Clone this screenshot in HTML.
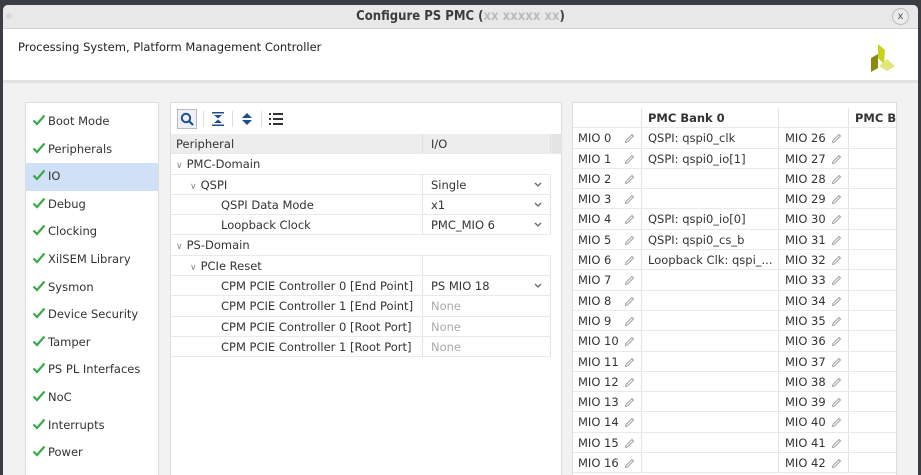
<!DOCTYPE html><html><head><style>
*{margin:0;padding:0;box-sizing:border-box}
body{width:921px;height:470px;overflow:hidden;background:#3a3d44;font-family:"DejaVu Sans","Liberation Sans",sans-serif;font-size:11.5px;color:#333;position:relative}
.abs{position:absolute}
#win{left:3px;top:5px;width:915px;height:470px;background:#f2f2f2;border-radius:5px 5px 0 0;overflow:hidden}
#title{left:0;top:0;width:915px;height:24px;background:#e8e8e8;border-bottom:1px solid #d0d0d0;text-align:center;font-weight:bold;font-size:13px;line-height:23px;color:#3c3c3c;font-family:"DejaVu Sans Condensed","DejaVu Sans",sans-serif}
#hdr{left:0;top:24px;width:915px;height:54px;background:#fff;border-bottom:3px solid #e2e2e2}
#nav{left:22px;top:97px;width:134px;height:380px;background:#fff;border:1px solid #ddd;padding-top:5px}
.ni{height:27.6px;line-height:27.6px;padding-left:4px;color:#333}
.ni .ck{display:inline-block;width:18px;vertical-align:middle;margin-top:-3px}
.sel{background:#cfe0f7}
#mid{left:167px;top:97px;width:392px;height:380px;background:#fff;border:1px solid #ddd}
.row{position:relative;height:20.3px;line-height:20px;border-bottom:1px solid #eaeaea;white-space:nowrap}
.c1{position:absolute;left:0;width:252px;height:100%;border-right:1px solid #e2e2e2}
.c2{position:absolute;left:253px;width:127px;height:100%;border-right:1px solid #e2e2e2;padding-left:7px}
.dd{position:absolute;right:8px;top:7px;width:8px;height:6px}
#rt{left:569px;top:97px;width:325px;height:380px;background:#fff;border:1px solid #ddd;overflow:hidden;padding-top:5px}
.r{position:relative;height:20.3px;line-height:20px;white-space:nowrap}
.r div{position:absolute;top:0;height:100%;border-bottom:1px solid #eaeaea;border-right:1px solid #e4e4e4}
.a{left:0;width:69px;padding-left:5px}
.b{left:69px;width:137px;padding-left:6px}
.c{left:206px;width:70px;padding-left:6px}
.d{left:276px;width:60px}
.a svg{position:absolute;right:6px;top:5px}
.c svg{position:absolute;left:52px;top:5px}
.tr{color:#888;font-size:9px;margin-right:4px}
</style></head><body>
<svg width="0" height="0" style="position:absolute"><defs>
<symbol id="p" viewBox="0 0 11 11"><path d="M1.5,9.5 L2,7.5 L8,1.5 L9.5,3 L3.5,9 Z" fill="none" stroke="#999" stroke-width="0.9"/></symbol>
<symbol id="v" viewBox="0 0 8 6"><path d="M1,1 L4,4 L7,1" fill="none" stroke="#666" stroke-width="1.3"/></symbol>
<symbol id="k" viewBox="0 0 14 12"><path d="M1.5,6.5 L5,10 L12.5,1.5" fill="none" stroke="#3aa94a" stroke-width="2.2"/></symbol>
</defs></svg>
<div id="win" class="abs">
<div id="title" class="abs">Configure PS PMC (<span style="color:#bbb">xx xxxxx xx</span>)</div>
<div class="abs" style="left:3px;top:8px;width:6px;height:6px;border-radius:3px;background:#d8d8d8"></div>
<div class="abs" style="left:889px;top:3px;width:17px;height:17px;border-radius:9px;border:1px solid #bbb;background:#ececec;font-size:10px;line-height:15px;text-align:center;color:#555">x</div>
<div id="hdr" class="abs">
<div class="abs" style="left:15px;top:11px;font-size:11.5px;color:#222">Processing System, Platform Management Controller</div>
<svg class="abs" style="left:866px;top:15px" width="30" height="30" viewBox="0 0 30 30"><polygon points="9,0 16,6 15,20 9,14" fill="#c8d21e"/><polygon points="2,14 9,10 9,24 2,28" fill="#8a8a10"/><polygon points="10,22 18,15 26,22 18,27" fill="#dfe67a"/></svg>
</div>
<div id="nav" class="abs">
<div class="ni"><svg class="ck" width="14" height="12"><use href="#k"/></svg>Boot Mode</div>
<div class="ni"><svg class="ck" width="14" height="12"><use href="#k"/></svg>Peripherals</div>
<div class="ni sel"><svg class="ck" width="14" height="12"><use href="#k"/></svg>IO</div>
<div class="ni"><svg class="ck" width="14" height="12"><use href="#k"/></svg>Debug</div>
<div class="ni"><svg class="ck" width="14" height="12"><use href="#k"/></svg>Clocking</div>
<div class="ni"><svg class="ck" width="14" height="12"><use href="#k"/></svg>XilSEM Library</div>
<div class="ni"><svg class="ck" width="14" height="12"><use href="#k"/></svg>Sysmon</div>
<div class="ni"><svg class="ck" width="14" height="12"><use href="#k"/></svg>Device Security</div>
<div class="ni"><svg class="ck" width="14" height="12"><use href="#k"/></svg>Tamper</div>
<div class="ni"><svg class="ck" width="14" height="12"><use href="#k"/></svg>PS PL Interfaces</div>
<div class="ni"><svg class="ck" width="14" height="12"><use href="#k"/></svg>NoC</div>
<div class="ni"><svg class="ck" width="14" height="12"><use href="#k"/></svg>Interrupts</div>
<div class="ni"><svg class="ck" width="14" height="12"><use href="#k"/></svg>Power</div>
</div>
<div id="mid" class="abs">
<div style="height:31px;position:relative">
<div class="abs" style="left:6px;top:6px;width:20px;height:20px;border:1px solid #bbb;background:#eef2f8"></div>
<svg class="abs" style="left:9px;top:9px" width="14" height="14"><circle cx="6" cy="6" r="4.2" fill="none" stroke="#1f4f8f" stroke-width="2"/><line x1="9" y1="9" x2="13" y2="13" stroke="#1f4f8f" stroke-width="2.2"/></svg>
<div class="abs" style="left:32px;top:8px;width:1px;height:16px;background:#ddd"></div>
<svg class="abs" style="left:40px;top:9px" width="14" height="14"><rect x="1" y="0" width="12" height="1.5" fill="#1f4f8f"/><polygon points="3,3 11,3 7,6.5" fill="#1f4f8f"/><polygon points="3,11 11,11 7,7.5" fill="#1f4f8f"/><rect x="1" y="12.5" width="12" height="1.5" fill="#1f4f8f"/></svg>
<div class="abs" style="left:61px;top:8px;width:1px;height:16px;background:#ddd"></div>
<svg class="abs" style="left:69px;top:9px" width="14" height="14"><polygon points="2,6 12,6 7,1" fill="#1f4f8f"/><polygon points="2,8 12,8 7,13" fill="#1f4f8f"/></svg>
<div class="abs" style="left:90px;top:8px;width:1px;height:16px;background:#ddd"></div>
<svg class="abs" style="left:98px;top:9px" width="14" height="14" fill="#333"><rect x="0" y="1" width="2" height="2"/><rect x="4" y="1" width="10" height="2"/><rect x="0" y="6" width="2" height="2"/><rect x="4" y="6" width="10" height="2"/><rect x="0" y="11" width="2" height="2"/><rect x="4" y="11" width="10" height="2"/></svg>
</div>
<div class="row" style="background:#ededed;width:392px"><div class="c1" style="padding-left:5px">Peripheral</div><div class="c2">I/O</div><div class="abs" style="left:381px;width:10px;height:100%;background:#e4e4e4"></div></div>
<div class="row" style="width:380px"><div class="c1" style="padding-left:5px;border-right:none"><span class="tr">∨</span>PMC-Domain</div></div>
<div class="row" style="width:380px"><div class="c1" style="padding-left:19px"><span class="tr">∨</span>QSPI</div><div class="c2">Single<svg class="dd"><use href="#v"/></svg></div></div>
<div class="row" style="width:380px"><div class="c1" style="padding-left:50px">QSPI Data Mode</div><div class="c2">x1<svg class="dd"><use href="#v"/></svg></div></div>
<div class="row" style="width:380px"><div class="c1" style="padding-left:50px">Loopback Clock</div><div class="c2">PMC_MIO 6<svg class="dd"><use href="#v"/></svg></div></div>
<div class="row" style="width:380px"><div class="c1" style="padding-left:5px;border-right:none"><span class="tr">∨</span>PS-Domain</div></div>
<div class="row" style="width:380px"><div class="c1" style="padding-left:19px"><span class="tr">∨</span>PCIe Reset</div><div class="c2"></div></div>
<div class="row" style="width:380px"><div class="c1" style="padding-left:50px">CPM PCIE Controller 0 [End Point]</div><div class="c2">PS MIO 18<svg class="dd"><use href="#v"/></svg></div></div>
<div class="row" style="width:380px"><div class="c1" style="padding-left:50px">CPM PCIE Controller 1 [End Point]</div><div class="c2" style="color:#aaa">None</div></div>
<div class="row" style="width:380px"><div class="c1" style="padding-left:50px">CPM PCIE Controller 0 [Root Port]</div><div class="c2" style="color:#aaa">None</div></div>
<div class="row" style="width:380px"><div class="c1" style="padding-left:50px">CPM PCIE Controller 1 [Root Port]</div><div class="c2" style="color:#aaa">None</div></div>
</div>
<div id="rt" class="abs">
<div class="r" style="font-weight:bold"><div class="a"></div><div class="b" style="padding-left:6px">PMC Bank 0</div><div class="c"></div><div class="d" style="padding-left:6px">PMC B</div></div>
<div class="r"><div class="a">MIO 0<svg width="11" height="11"><use href="#p"/></svg></div><div class="b">QSPI: qspi0_clk</div><div class="c">MIO 26<svg width="11" height="11"><use href="#p"/></svg></div><div class="d"></div></div>
<div class="r"><div class="a">MIO 1<svg width="11" height="11"><use href="#p"/></svg></div><div class="b">QSPI: qspi0_io[1]</div><div class="c">MIO 27<svg width="11" height="11"><use href="#p"/></svg></div><div class="d"></div></div>
<div class="r"><div class="a">MIO 2<svg width="11" height="11"><use href="#p"/></svg></div><div class="b"></div><div class="c">MIO 28<svg width="11" height="11"><use href="#p"/></svg></div><div class="d"></div></div>
<div class="r"><div class="a">MIO 3<svg width="11" height="11"><use href="#p"/></svg></div><div class="b"></div><div class="c">MIO 29<svg width="11" height="11"><use href="#p"/></svg></div><div class="d"></div></div>
<div class="r"><div class="a">MIO 4<svg width="11" height="11"><use href="#p"/></svg></div><div class="b">QSPI: qspi0_io[0]</div><div class="c">MIO 30<svg width="11" height="11"><use href="#p"/></svg></div><div class="d"></div></div>
<div class="r"><div class="a">MIO 5<svg width="11" height="11"><use href="#p"/></svg></div><div class="b">QSPI: qspi0_cs_b</div><div class="c">MIO 31<svg width="11" height="11"><use href="#p"/></svg></div><div class="d"></div></div>
<div class="r"><div class="a">MIO 6<svg width="11" height="11"><use href="#p"/></svg></div><div class="b">Loopback Clk: qspi_...</div><div class="c">MIO 32<svg width="11" height="11"><use href="#p"/></svg></div><div class="d"></div></div>
<div class="r"><div class="a">MIO 7<svg width="11" height="11"><use href="#p"/></svg></div><div class="b"></div><div class="c">MIO 33<svg width="11" height="11"><use href="#p"/></svg></div><div class="d"></div></div>
<div class="r"><div class="a">MIO 8<svg width="11" height="11"><use href="#p"/></svg></div><div class="b"></div><div class="c">MIO 34<svg width="11" height="11"><use href="#p"/></svg></div><div class="d"></div></div>
<div class="r"><div class="a">MIO 9<svg width="11" height="11"><use href="#p"/></svg></div><div class="b"></div><div class="c">MIO 35<svg width="11" height="11"><use href="#p"/></svg></div><div class="d"></div></div>
<div class="r"><div class="a">MIO 10<svg width="11" height="11"><use href="#p"/></svg></div><div class="b"></div><div class="c">MIO 36<svg width="11" height="11"><use href="#p"/></svg></div><div class="d"></div></div>
<div class="r"><div class="a">MIO 11<svg width="11" height="11"><use href="#p"/></svg></div><div class="b"></div><div class="c">MIO 37<svg width="11" height="11"><use href="#p"/></svg></div><div class="d"></div></div>
<div class="r"><div class="a">MIO 12<svg width="11" height="11"><use href="#p"/></svg></div><div class="b"></div><div class="c">MIO 38<svg width="11" height="11"><use href="#p"/></svg></div><div class="d"></div></div>
<div class="r"><div class="a">MIO 13<svg width="11" height="11"><use href="#p"/></svg></div><div class="b"></div><div class="c">MIO 39<svg width="11" height="11"><use href="#p"/></svg></div><div class="d"></div></div>
<div class="r"><div class="a">MIO 14<svg width="11" height="11"><use href="#p"/></svg></div><div class="b"></div><div class="c">MIO 40<svg width="11" height="11"><use href="#p"/></svg></div><div class="d"></div></div>
<div class="r"><div class="a">MIO 15<svg width="11" height="11"><use href="#p"/></svg></div><div class="b"></div><div class="c">MIO 41<svg width="11" height="11"><use href="#p"/></svg></div><div class="d"></div></div>
<div class="r"><div class="a">MIO 16<svg width="11" height="11"><use href="#p"/></svg></div><div class="b"></div><div class="c">MIO 42<svg width="11" height="11"><use href="#p"/></svg></div><div class="d"></div></div>
</div>
</div>
</body></html>
